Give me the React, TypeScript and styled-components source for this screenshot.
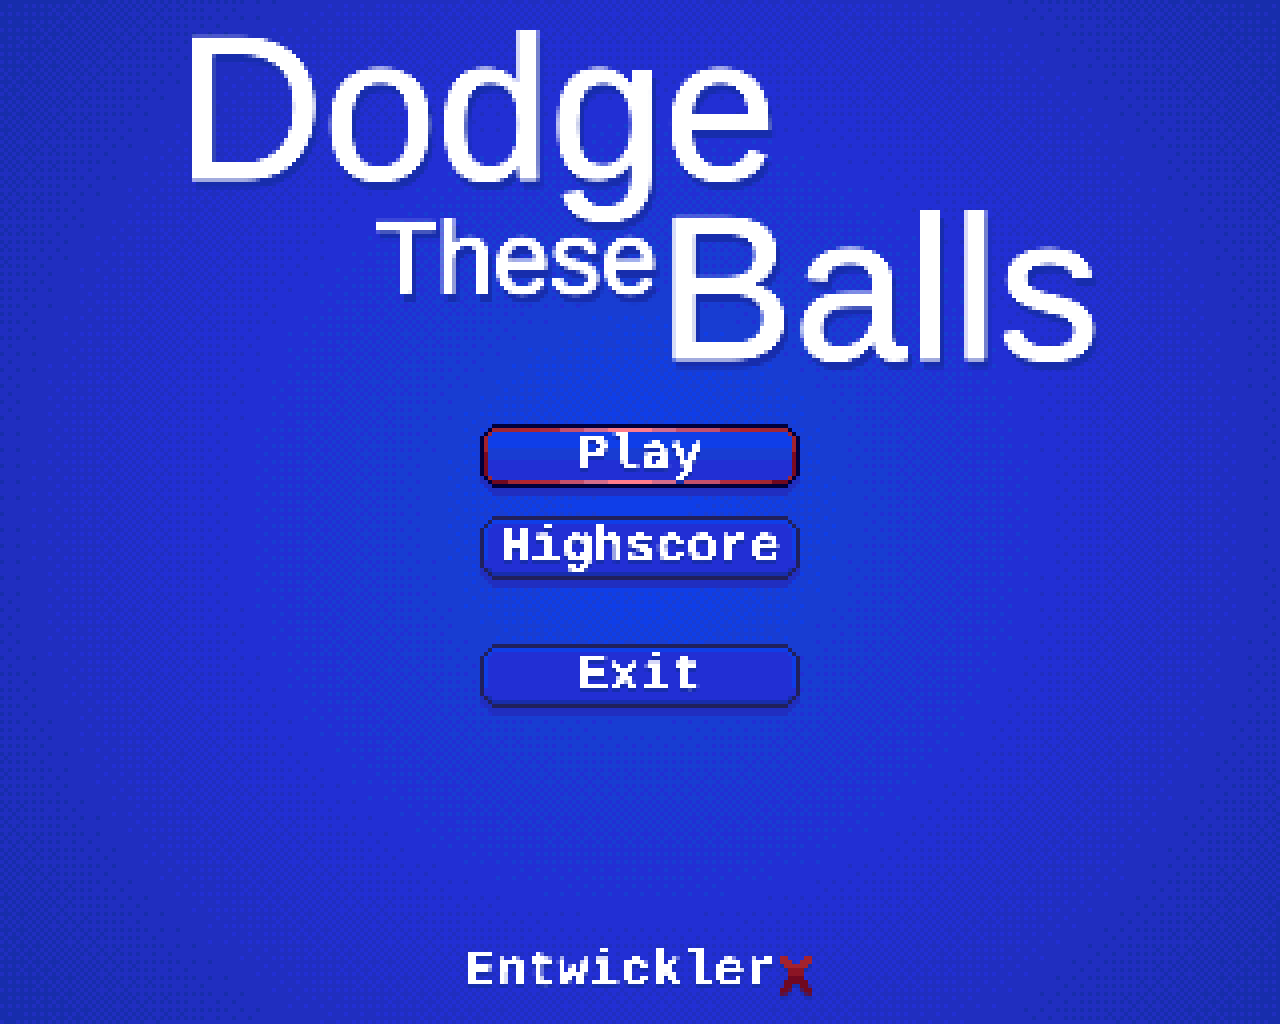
import React, { useEffect, useRef } from "react";
import styled, { createGlobalStyle, css } from "styled-components";

const PX = 4;

const colors = {
  glow: "#0f3ee8",
  azure: "#183dd2",
  blue: "#222fd4",
  indigo: "#202ec0",
  navy: "#172dac",
  outline: "#20205c",
  ink: "#00003c",
};

const GlobalStyle = createGlobalStyle`
  *, *::before, *::after { box-sizing: border-box; }
  body { margin: 0; background: ${colors.blue}; }
`;

/* Polygon with stepped corners, `n` art pixels deep. */
const stepped = (n: number) => {
  const corner: [number, number][] = [];
  for (let i = 0; i < n; i++) {
    corner.push([i * PX, (n - i) * PX]);
    corner.push([(i + 1) * PX, (n - i) * PX]);
  }
  corner.push([n * PX, 0]);
  const left = (x: number) => `${x}px`;
  const far = (x: number) => `calc(100% - ${x}px)`;
  const back = [...corner].reverse();
  return `polygon(${[
    ...corner.map(([x, y]) => `${left(x)} ${left(y)}`),
    ...back.map(([x, y]) => `${far(x)} ${left(y)}`),
    ...corner.map(([x, y]) => `${far(x)} ${far(y)}`),
    ...back.map(([x, y]) => `${left(x)} ${far(y)}`),
  ].join(", ")})`;
};

const Backdrop = styled.canvas`
  position: fixed;
  inset: 0;
  z-index: -1;
  image-rendering: pixelated;
`;

const FilterDefs = styled.svg`
  position: absolute;
  width: 0;
  height: 0;
`;

const Screen = styled.main`
  min-height: 100vh;
  display: flex;
  flex-direction: column;
  align-items: center;
  padding: 18px 0 28px;
  color: #fff;
`;

const Title = styled.h1`
  width: 100%;
  max-width: 928px;
  margin: 0;
  font-family: "Liberation Sans", Arial, sans-serif;
  font-weight: 400;
  -webkit-text-stroke: 2px #fff;
  filter: url(#pixel-soft) drop-shadow(4px 8px 0 ${colors.navy});
`;

const TitleRow = styled.span<{ $end?: boolean }>`
  display: flex;
  align-items: flex-start;
  justify-content: ${(p) => (p.$end ? "flex-end" : "flex-start")};
  padding-right: 4px;
`;

const BigWord = styled.span`
  font-size: 204px;
  line-height: 180px;
`;

const SmallWord = styled.span`
  margin-top: 20px;
  font-size: 102px;
  line-height: 80px;
`;

const Menu = styled.ul`
  list-style: none;
  margin: 46px 0 auto;
  padding: 0;
  width: 320px;
`;

const MenuItem = styled.li<{ $apart?: boolean }>`
  filter: drop-shadow(0 8px 0 ${colors.indigo});
  &:not(:first-child) {
    margin-top: ${(p) => (p.$apart ? 64 : 28)}px;
  }
`;

const idle = css`
  background: ${colors.outline};
  &::before {
    background: linear-gradient(
      ${colors.glow} 40px,
      ${colors.blue} 40px,
      ${colors.blue} 48px,
      ${colors.navy} 48px
    );
  }
  &::after {
    background: ${colors.blue};
  }
`;

const selected = css`
  background: ${colors.ink};
  &::before {
    background:
      linear-gradient(#a4222e 24px, #7c0a20 24px) left / 4px 100% no-repeat,
      linear-gradient(#a4222e 24px, #7c0a20 24px) right / 4px 100% no-repeat,
      linear-gradient(#700820, #700820) 0 100% / 24px 4px no-repeat,
      linear-gradient(#700820, #700820) 100% 100% / 24px 4px no-repeat,
      linear-gradient(
        90deg,
        #a02632 36px,
        #b0242e 36px 56px,
        #ac2c40 56px 76px,
        #c4506c 76px 100px,
        #d46c8c 100px 124px,
        #ff7c8c 124px 168px,
        #d46c8c 168px 192px,
        #c4506c 192px 236px,
        #ac2c40 236px 256px,
        #b0242e 256px 276px,
        #a02632 276px
      );
  }
  &::after {
    background: linear-gradient(
      ${colors.glow} 16px,
      ${colors.azure} 16px 28px,
      ${colors.blue} 28px
    );
  }
`;

const MenuButton = styled.button<{ $selected?: boolean }>`
  position: relative;
  display: block;
  width: 100%;
  height: 64px;
  padding: 0;
  border: 0;
  outline: 0;
  color: inherit;
  cursor: pointer;
  clip-path: ${stepped(3)};
  &::before,
  &::after {
    content: "";
    position: absolute;
  }
  &::before {
    inset: 4px;
    clip-path: ${stepped(2)};
  }
  &::after {
    inset: 8px;
    clip-path: ${stepped(1)};
  }
  ${(p) => (p.$selected ? selected : idle)}
`;

const PixelText = styled.span`
  position: relative;
  z-index: 1;
  display: block;
  font: 700 52px/40px "Liberation Mono", "Courier New", monospace;
  filter: url(#pixel-hard) drop-shadow(0 4px 0 ${colors.navy});
`;

const Credit = styled.footer`
  display: flex;
  align-items: flex-start;
`;

const CreditMark = styled(PixelText)`
  margin-top: 4px;
  font-family: "DejaVu Sans", sans-serif;
  color: transparent;
  background: linear-gradient(#a4222e 12px, #8c1424 12px 20px, #700820 20px);
  background-clip: text;
  -webkit-background-clip: text;
`;

const ramp: [number, number[]][] = [
  [40, [15, 62, 232]],
  [205, [24, 61, 210]],
  [400, [34, 47, 212]],
  [615, [32, 46, 192]],
  [840, [23, 45, 172]],
];

const bayer = [0, 8, 2, 10, 12, 4, 14, 6, 3, 11, 1, 9, 15, 7, 13, 5];

function paint(canvas: HTMLCanvasElement) {
  const w = Math.ceil(window.innerWidth / PX);
  const h = Math.ceil(window.innerHeight / PX);
  canvas.width = w;
  canvas.height = h;
  canvas.style.width = `${w * PX}px`;
  canvas.style.height = `${h * PX}px`;
  const ctx = canvas.getContext("2d");
  if (!ctx) return;
  const image = ctx.createImageData(w, h);
  for (let y = 0; y < h; y++) {
    for (let x = 0; x < w; x++) {
      const r = Math.hypot(x + 0.5 - w / 2, y + 0.5 - h / 2) * PX;
      let i = 0;
      while (i < ramp.length - 2 && r > ramp[i + 1][0]) i++;
      const t = (r - ramp[i][0]) / (ramp[i + 1][0] - ramp[i][0]);
      const limit = (bayer[(y % 4) * 4 + (x % 4)] + 0.5) / 16;
      const c = ramp[t > limit ? i + 1 : i][1];
      image.data.set([c[0], c[1], c[2], 255], (y * w + x) * 4);
    }
  }
  ctx.putImageData(image, 0, 0);
}

function DitheredGlow() {
  const ref = useRef<HTMLCanvasElement>(null);
  useEffect(() => {
    const draw = () => ref.current && paint(ref.current);
    draw();
    window.addEventListener("resize", draw);
    return () => window.removeEventListener("resize", draw);
  }, []);
  return <Backdrop ref={ref} aria-hidden="true" />;
}

/* Averages each 4x4 block and spreads the result over the block. */
function PixelFilter({ id, slope, intercept }: { id: string; slope: number; intercept: number }) {
  return (
    <filter
      id={id}
      x="-5%"
      y="-20%"
      width="110%"
      height="150%"
      colorInterpolationFilters="sRGB"
    >
      <feFlood x="2" y="2" width="1" height="1" floodColor="#000" />
      <feOffset dx="0" dy="0" x="0" y="0" width="4" height="4" />
      <feTile result="dots" />
      <feConvolveMatrix
        in="SourceGraphic"
        order="4"
        targetX="2"
        targetY="2"
        kernelMatrix="1 1 1 1 1 1 1 1 1 1 1 1 1 1 1 1"
        divisor="16"
        edgeMode="none"
        preserveAlpha="false"
        result="mean"
      />
      <feComposite in="mean" in2="dots" operator="in" result="a" />
      <feOffset in="a" dx="1" dy="0" result="a1" />
      <feMerge result="b">
        <feMergeNode in="a" />
        <feMergeNode in="a1" />
      </feMerge>
      <feOffset in="b" dx="-2" dy="0" result="b1" />
      <feMerge result="c">
        <feMergeNode in="b" />
        <feMergeNode in="b1" />
      </feMerge>
      <feOffset in="c" dx="0" dy="1" result="c1" />
      <feMerge result="d">
        <feMergeNode in="c" />
        <feMergeNode in="c1" />
      </feMerge>
      <feOffset in="d" dx="0" dy="-2" result="d1" />
      <feMerge result="e">
        <feMergeNode in="d" />
        <feMergeNode in="d1" />
      </feMerge>
      <feComponentTransfer in="e">
        <feFuncA type="linear" slope={slope} intercept={intercept} />
      </feComponentTransfer>
    </filter>
  );
}

const items = [
  { label: "Play", selected: true },
  { label: "Highscore" },
  { label: "Exit", apart: true },
];

export default function App() {
  return (
    <>
      <GlobalStyle />
      <DitheredGlow />
      <FilterDefs aria-hidden="true">
        <PixelFilter id="pixel-soft" slope={1.6} intercept={-0.2} />
        <PixelFilter id="pixel-hard" slope={6} intercept={-2.2} />
      </FilterDefs>
      <Screen>
        <Title>
          <TitleRow>
            <BigWord>Dodge</BigWord>
          </TitleRow>
          <TitleRow $end>
            <SmallWord>These</SmallWord>
            <BigWord>Balls</BigWord>
          </TitleRow>
        </Title>
        <Menu>
          {items.map((item) => (
            <MenuItem key={item.label} $apart={item.apart}>
              <MenuButton type="button" $selected={item.selected}>
                <PixelText>{item.label}</PixelText>
              </MenuButton>
            </MenuItem>
          ))}
        </Menu>
        <Credit>
          <PixelText>Entwickler</PixelText>
          <CreditMark>X</CreditMark>
        </Credit>
      </Screen>
    </>
  );
}
